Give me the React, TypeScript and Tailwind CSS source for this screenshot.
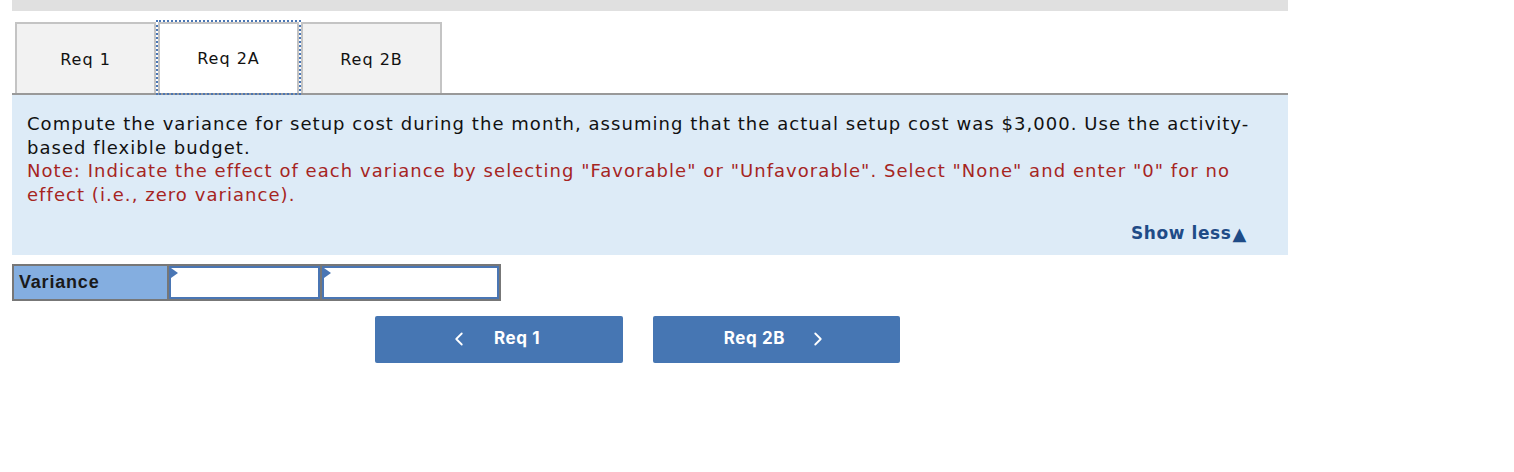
import { ChevronLeft, ChevronRight } from "lucide-react";

const tabs = ["Req 1", "Req 2A", "Req 2B"];

export default function App() {
  return (
    <div className="w-[1514px] h-[472px] bg-white font-['DejaVu_Sans',sans-serif]">
      <div className="ml-3 w-[1276px]">
        <div className="h-[11px] bg-[#e0e0e0]" />

        {/* tabs */}
        <div className="mt-[11px] flex border-b-2 border-[#999] pl-[3px]">
          {tabs.map((t, i) =>
            i === 1 ? (
              <div key={t} className="-mt-[2px] -mb-[2px] border-2 border-dotted border-[#4a76b4]">
                <div className="flex h-[71px] w-[141px] items-center justify-center border-2 border-b-0 border-[#c4c4c4] bg-white text-[16px] tracking-[1px] text-[#111]">
                  {t}
                </div>
              </div>
            ) : (
              <div
                key={t}
                className="flex h-[71px] w-[141px] items-center justify-center border-2 border-b-0 border-[#c4c4c4] bg-[#f2f2f2] pt-[3px] text-[16px] tracking-[1px] text-[#111]"
              >
                {t}
              </div>
            )
          )}
        </div>

        {/* instructions */}
        <div className="bg-[#ddebf7] px-[15px] pt-[17px] pb-[9px] text-[18px] leading-[23.5px] tracking-[1.05px]">
          <p className="text-[#111]">
            Compute the variance for setup cost during the month, assuming that the actual setup cost was $3,000. Use the activity-based flexible budget.
          </p>
          <p className="text-[#a6251f]">
            Note: Indicate the effect of each variance by selecting "Favorable" or "Unfavorable". Select "None" and enter "0" for no effect (i.e., zero variance).
          </p>
          <div className="mt-[16px] flex justify-end pr-[26px]">
            <span className="flex items-center text-[17px] font-bold tracking-[0.6px] text-[#1f4b87]">
              Show less
              <span className="ml-[1px] text-[18px] leading-none">▲</span>
            </span>
          </div>
        </div>

        {/* variance table */}
        <div className="mt-[9px] flex w-[489px] border-2 border-[#777] bg-[#777]">
          <div className="flex h-[33px] w-[153px] items-center bg-[#84aee0] pl-[5px] font-['Liberation_Sans',sans-serif] text-[18px] font-bold tracking-[0.8px] text-[#1a1a1a]">
            Variance
          </div>
          <div className="relative ml-[2px] h-[33px] w-[151px] border-2 border-[#4a76b4] bg-white">
            <div className="absolute left-0 top-0 h-0 w-0 border-y-[5px] border-l-[7px] border-y-transparent border-l-[#4a76b4]" />
          </div>
          <div className="relative ml-[2px] h-[33px] flex-1 border-2 border-[#4a76b4] bg-white">
            <div className="absolute left-0 top-0 h-0 w-0 border-y-[5px] border-l-[7px] border-y-transparent border-l-[#4a76b4]" />
          </div>
        </div>

        {/* nav buttons */}
        <div className="mt-[15px] flex gap-[30px] pl-[363px] font-['Inter',sans-serif]">
          <button className="flex h-[47px] w-[248px] items-center justify-center gap-[24px] rounded-[2px] bg-[#4676b3] pr-[10px] text-[17px] font-bold tracking-[0.6px] text-white">
            <ChevronLeft size={22} strokeWidth={2} />
            Req 1
          </button>
          <button className="flex h-[47px] w-[247px] items-center justify-center gap-[22px] rounded-[2px] bg-[#4676b3] text-[17px] font-bold tracking-[0.6px] text-white">
            Req 2B
            <ChevronRight size={22} strokeWidth={2} />
          </button>
        </div>
      </div>
    </div>
  );
}
